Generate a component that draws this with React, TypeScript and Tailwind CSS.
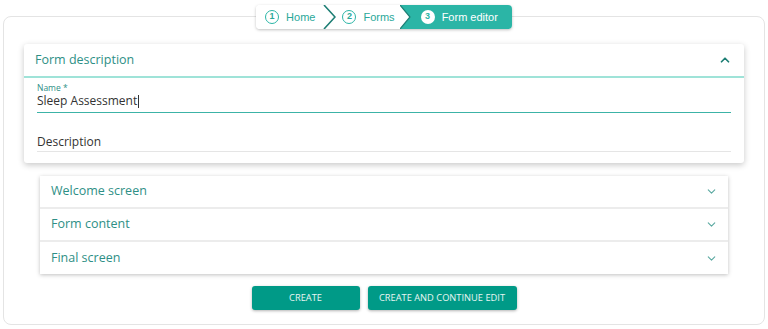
import { ChevronDown, ChevronUp } from "lucide-react";

const sans = { fontFamily: '"Open Sans", "Liberation Sans", sans-serif' };

function Step({ n, label, active, pad }: { n: number; label: string; active?: boolean; pad: string }) {
  return (
    <div
      className={
        "flex items-center gap-[7px] h-full " +
        pad +
        (active ? " bg-[#2bb5a6] text-white rounded-r-[4px]" : " bg-white text-[#2aa89a]")
      }
    >
      <span
        className={
          "w-[14px] h-[14px] rounded-full flex items-center justify-center text-[9px] font-bold " +
          (active ? "bg-white text-[#2bb5a6]" : "border border-[#2bb5a6] text-[#2aa89a]")
        }
      >
        {n}
      </span>
      <span className="text-[11px]">{label}</span>
    </div>
  );
}

function Breadcrumb() {
  return (
    <div
      className="relative z-10 flex h-[24px] rounded-[4px] shadow-[0_1px_3px_rgba(0,0,0,0.25)] bg-white"
      style={{ fontFamily: '"Liberation Sans", Arial, sans-serif' }}
    >
      <div className="rounded-l-[4px] overflow-hidden flex h-full">
        <Step n={1} label="Home" pad="pl-[9px] pr-[8px]" />
      </div>
      <svg width="13" height="24" viewBox="0 0 13 24" className="block">
        <rect width="13" height="24" fill="#fff" />
        <polyline points="1,0 12,12 1,24" fill="none" stroke="#1d7e74" strokeWidth="1.6" />
      </svg>
      <Step n={2} label="Forms" pad="pl-[6px] pr-[5px]" />
      <svg width="11" height="24" viewBox="0 0 11 24" className="block">
        <rect width="11" height="24" fill="#2bb5a6" />
        <polygon points="0,0 10,12 0,24" fill="#fff" />
        <polyline points="0,0 10,12 0,24" fill="none" stroke="#1d7e74" strokeWidth="1.2" />
      </svg>
      <Step n={3} label="Form editor" active pad="pl-[10px] pr-[14px]" />
    </div>
  );
}

function Row({ title, last }: { title: string; last?: boolean }) {
  return (
    <div
      className={
        "flex items-center justify-between pl-[11px] pr-[10px] bg-white " +
        (last ? "h-[32px]" : "h-[33px] border-b-[2px] border-[#ececec]")
      }
    >
      <span className="text-[12.5px] text-[#2e8f86]">{title}</span>
      <ChevronDown className="w-[13px] h-[13px] text-[#5aa9a1]" strokeWidth={2} />
    </div>
  );
}

export default function App() {
  return (
    <div className="w-[768px] h-[329px] bg-white pt-[5px] overflow-hidden" style={sans}>
      <div className="flex justify-center">
        <Breadcrumb />
      </div>
      <div className="mx-[3px] mt-[-13px] h-[309px] border border-[#e4e4e4] rounded-[8px] pt-[27px] pl-[20px] pr-[20px]">
        <div className="bg-white rounded-[3px] shadow-[0_2px_6px_rgba(0,0,0,0.22)]">
          <div className="flex items-center justify-between h-[34px] pl-[11px] pr-[12px] border-b-[2px] border-[#9fe3d8]">
            <span className="text-[12.5px] text-[#2e8f86]">Form description</span>
            <ChevronUp className="w-[14px] h-[14px] text-[#1d7e74]" strokeWidth={3} />
          </div>
          <div className="px-[13px] pt-[4px] pb-[11px]">
            <div className="text-[8.5px] leading-[11px] text-[#2e8f86]">Name *</div>
            <div className="text-[12px] leading-[16px] text-[#333] pb-[3px] border-b-[1.5px] border-[#3cb3a7]">
              Sleep Assessment<span className="inline-block w-px h-[13px] bg-[#333] align-middle ml-px" />
            </div>
            <div className="text-[12px] leading-[16px] text-[#333] mt-[21px] pb-[1px] border-b border-[#e5e5e5]">
              Description
            </div>
          </div>
        </div>
        <div className="mx-[16px] mt-[13px] shadow-[0_1px_4px_rgba(0,0,0,0.25)]">
          <Row title="Welcome screen" />
          <Row title="Form content" />
          <Row title="Final screen" last />
        </div>
        <div className="flex justify-center gap-[8px] mt-[12px]">
          <button className="w-[108px] h-[24px] rounded-[3px] bg-[#009a87] text-[#e8f6f3] text-[9.3px] shadow-[0_1px_3px_rgba(0,0,0,0.3)]">
            CREATE
          </button>
          <button className="w-[149px] h-[24px] rounded-[3px] bg-[#009a87] text-[#e8f6f3] text-[9.3px] shadow-[0_1px_3px_rgba(0,0,0,0.3)]">
            CREATE AND CONTINUE EDIT
          </button>
        </div>
      </div>
    </div>
  );
}
